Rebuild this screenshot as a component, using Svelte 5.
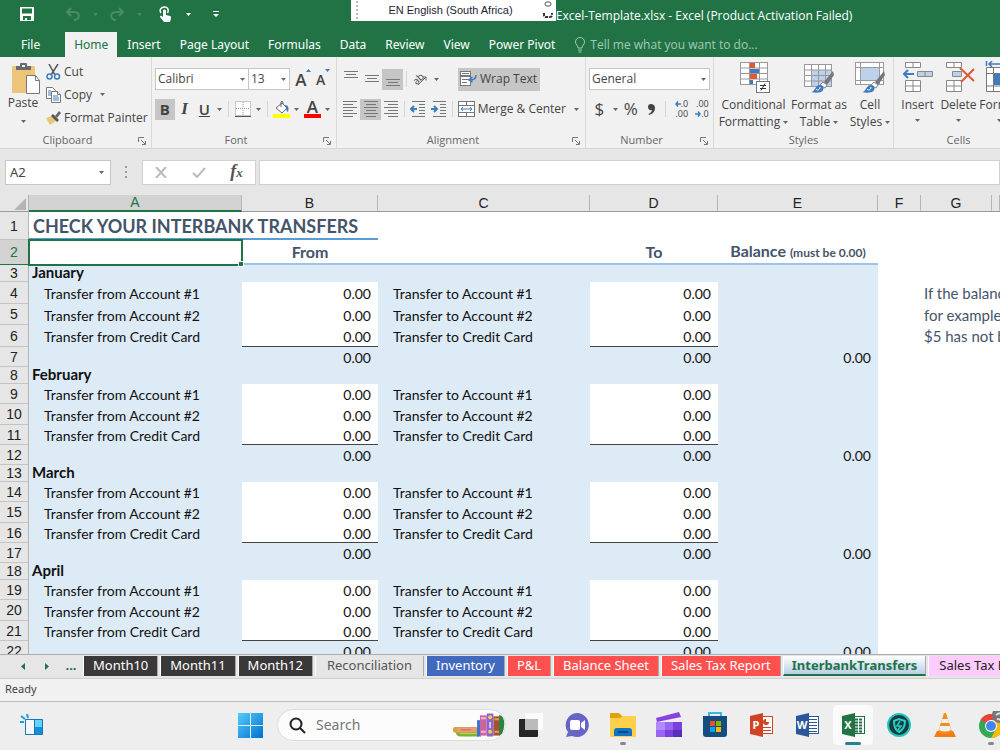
<script lang="ts">
	const ribbonTabs = ["File", "Home", "Insert", "Page Layout", "Formulas", "Data", "Review", "View", "Power Pivot"];
	let activeTab = $state("Home");

	let fontName = $state("Calibri");
	let fontSize = $state("13");
	let numberFormat = $state("General");
	let formula = $state("");

	const columns = [
		{ name: "A", width: 213 },
		{ name: "B", width: 136 },
		{ name: "C", width: 212 },
		{ name: "D", width: 128 },
		{ name: "E", width: 160 },
		{ name: "F", width: 43 },
		{ name: "G", width: 71 },
	];

	const months = ["January", "February", "March", "April"];
	const accounts = ["Account #1", "Account #2", "Credit Card"];
	const notes = ["If the balance is not zero,", "for example, $5.00, then", "$5 has not been entered"];

	// the first block has slightly taller rows than the rest
	const firstHeights = [17, 22, 21, 22, 20];
	const blockHeights = [17, 20, 21, 20, 20];

	const blocks = months.map((month, i) => {
		const heights = i == 0 ? firstHeights : blockHeights;
		return { month, heights, start: 3 + i * 5, notes: i == 0 ? notes : [] };
	});

	const sheets = [
		{ name: "Month10", kind: "dark" },
		{ name: "Month11", kind: "dark" },
		{ name: "Month12", kind: "dark" },
		{ name: "Reconciliation", kind: "plain" },
		{ name: "Inventory", kind: "blue" },
		{ name: "P&L", kind: "red" },
		{ name: "Balance Sheet", kind: "red" },
		{ name: "Sales Tax Report", kind: "red" },
		{ name: "InterbankTransfers", kind: "current" },
		{ name: "Sales Tax Rates", kind: "pink" },
	];
</script>

{#snippet caret()}
	<svg class="caret" width="5" height="3" viewBox="0 0 5 3" aria-hidden="true"><path d="M0 0h5L2.500 3z" fill="currentColor" /></svg>
{/snippet}

{#snippet launcher()}
	<svg class="launcher" width="8" height="8" viewBox="0 0 8 8" fill="none" stroke="#777" aria-hidden="true"><path d="M.5 5V.5H6M3 3l4 4M7.500 4v3.500H4" /></svg>
{/snippet}

{#snippet lines(widths: number[], top: number, align: string)}
	<svg width="16" height="18" viewBox="0 0 16 18" stroke="#777" aria-hidden="true">
		{#each widths as w, i}
			{@const x = align == "left" ? 1 : align == "right" ? 15 - w : 8 - w / 2}
			<path d="M{x} {top + i * 3 + 0.5}h{w}" />
		{/each}
	</svg>
{/snippet}

{#snippet brush()}
	<path d="M31 10l-9 11 3 3 7-10z" fill="#777" />
	<path d="M21 21l4 3-2 3-5-3z" fill="#fff" stroke="#888" />
	<path d="M9 31c4 0 4-7 9-7 4 0 5 5 1 7-3 1-7 1-10 0z" fill="#3f7cbf" />
	<path d="M14 28c1 2 4 1 4-2" fill="none" stroke="#fff" />
{/snippet}

<div class="excel">
	<header>
		<div class="titlebar">
			<button class="quick" aria-label="Save">
				<svg width="14" height="14" viewBox="0 0 14 14" fill="#fff"><path fill-rule="evenodd" d="M0 0h14v14H0zM2 1.500v5h10v-5zM3 9v4h2v-2h2v2h4V9z" /></svg>
			</button>
			<button class="quick dim" aria-label="Undo">
				<svg width="16" height="14" viewBox="0 0 16 14" fill="none" stroke="currentColor" stroke-width="2"><path d="M6 1L2 5l4 4M2 5h7c7 0 6 8 0 8" /></svg>
			</button>
			<span class="quick-caret dim">{@render caret()}</span>
			<button class="quick dim" aria-label="Redo">
				<svg width="16" height="14" viewBox="0 0 16 14" fill="none" stroke="currentColor" stroke-width="2"><path d="M10 1l4 4-4 4M14 5H7C0 5 1 13 7 13" /></svg>
			</button>
			<span class="quick-caret dim">{@render caret()}</span>
			<button class="quick touch" aria-label="Touch mode">
				<svg width="14" height="16" viewBox="0 0 14 16" fill="#fff"><path d="M4 5c0-2 3-2 3 0v4l4 1c1 0 1 1 1 2l-1 4H5L1 11c0-1 1-2 3 0z" /><path d="M2 7C0 4 2 1 5.500 1S10 4 8.500 7" fill="none" stroke="#fff" stroke-width="1.500" /></svg>
			</button>
			<span class="quick-caret">{@render caret()}</span>
			<button class="quick more" aria-label="Customize toolbar">
				<svg width="6" height="7" viewBox="0 0 6 7" fill="#fff"><path d="M0 0h6v1H0zM0 3h6L3 6z" /></svg>
			</button>
			<span class="filename">-Excel-Template.xlsx - Excel (Product Activation Failed)</span>
			<div class="language">
				<i></i>
				<span>EN English (South Africa)</span>
				<svg width="10" height="20" viewBox="0 0 10 20" fill="none" stroke="#555"><rect x="2" y="2" width="6" height="4" rx="2" /><path d="M1 13v2q0 2 2 2h4q2 0 2-2v-2" stroke="#333" stroke-width="2" stroke-dasharray="3 1" /></svg>
			</div>
		</div>
		<nav class="tabs">
			{#each ribbonTabs as tab}
				<button class:active={tab == activeTab} class:file={tab == "File"} onclick={() => (activeTab = tab)}>{tab}</button>
			{/each}
			<label class="tell">
				<svg width="12" height="16" viewBox="0 0 12 16" fill="none" stroke="currentColor"><path d="M4 11C4 8 1.500 8 1.500 5a4.500 4.500 0 0 1 9 0c0 3-2.500 3-2.500 6zM4 13h4M4.500 15h3" /></svg>
				<input type="text" placeholder="Tell me what you want to do..." aria-label="Tell me what you want to do" />
			</label>
		</nav>
	</header>

	<div class="ribbon">
		<section class="group clipboard">
			<div class="body">
				<button class="paste">
					<svg width="30" height="32" viewBox="0 0 30 32">
						<rect x="1" y="3" width="23" height="27" rx="1" fill="#ecc57b" />
						<path d="M5 3h4V1q0-1 1-1h5q1 0 1 1v2h4v4H5z" fill="#6b6b6b" /><rect x="11" y="2" width="3" height="2" fill="#f1f1f1" />
						<path d="M15.500 12.500h9l4 5v13h-13z" fill="#fff" stroke="#777" /><path d="M24.500 12.500v5h4" fill="none" stroke="#777" />
					</svg>
					<span>Paste</span>
					{@render caret()}
				</button>
				<div class="stack">
					<button>
						<svg width="15" height="16" viewBox="0 0 15 16" fill="none" stroke="#555" stroke-width="1.500"><path d="M3 0l6 11M12 0L5 11" /><circle cx="3.500" cy="12.500" r="2.500" stroke="#3f7cbf" /><circle cx="11" cy="12.500" r="2.500" stroke="#3f7cbf" /></svg>
						<span>Cut</span>
					</button>
					<button>
						<svg width="15" height="16" viewBox="0 0 15 16" fill="#fff" stroke="#777"><path d="M.5.5h6l3 3v8h-9z" /><path d="M2 4h3M2 6h4M2 8h4" stroke="#3f7cbf" /><path d="M5.500 4.500h6l3 3v8h-9z" /><path d="M11.500 4.500v3h3" /><path d="M7 9h5M7 11h6M7 13h6" stroke="#3f7cbf" /></svg>
						<span>Copy</span>
						{@render caret()}
					</button>
					<button>
						<svg width="15" height="14" viewBox="0 0 15 14"><path d="M0 7l6-2 4 5-6 4z" fill="#ecc57b" /><path d="M5 5l2-2 6 6-2 2z" fill="#555" /><path d="M9 5l4-5 2 2-4 5z" fill="#666" /></svg>
						<span>Format Painter</span>
					</button>
				</div>
			</div>
			<h2>Clipboard</h2>
			{@render launcher()}
		</section>

		<section class="group font">
			<div class="body rows">
				<div class="row">
					<div class="combo name">
						<select bind:value={fontName} aria-label="Font"><option>Calibri</option><option>Arial</option></select>
						{@render caret()}
					</div>
					<div class="combo size">
						<select bind:value={fontSize} aria-label="Font size"><option>11</option><option>13</option></select>
						{@render caret()}
					</div>
					<button class="tool grow" aria-label="Increase font size">
						<b>A</b><svg width="5" height="3" viewBox="0 0 5 3"><path d="M0 3h5L2.500 0z" fill="#3f7cbf" /></svg>
					</button>
					<button class="tool grow small" aria-label="Decrease font size">
						<b>A</b><svg width="5" height="3" viewBox="0 0 5 3"><path d="M0 0h5L2.500 3z" fill="#3f7cbf" /></svg>
					</button>
				</div>
				<div class="row">
					<button class="tool on bold">B</button>
					<button class="tool italic">I</button>
					<button class="tool underline">U</button>
					<span class="drop">{@render caret()}</span>
					<hr />
					<button class="tool" aria-label="Borders">
						<svg width="16" height="16" viewBox="0 0 16 16" fill="#fff" stroke="#999"><rect x=".5" y=".5" width="15" height="14" stroke-dasharray="1 1" /><path d="M8 1v14M1 7.500h14" stroke-dasharray="1 1" /><path d="M0 15.500h16" stroke="#555" /></svg>
					</button>
					<span class="drop">{@render caret()}</span>
					<hr />
					<button class="tool" aria-label="Fill color">
						<svg width="18" height="17" viewBox="0 0 18 17"><path d="M3 7l6-5 5 5-5 5z" fill="#fff" stroke="#666" /><path d="M8 6V1q1-1 2 0v2" fill="none" stroke="#666" /><path d="M12 4c4 0 4 4 3 7-2-1-2-4-3-7z" fill="#3f7cbf" /><rect y="13" width="17" height="4" fill="#ff0" /></svg>
					</button>
					<span class="drop">{@render caret()}</span>
					<button class="tool color" aria-label="Font color"><b>A</b></button>
					<span class="drop">{@render caret()}</span>
				</div>
			</div>
			<h2>Font</h2>
			{@render launcher()}
		</section>

		<section class="group alignment">
			<div class="body rows">
				<div class="row">
					<button class="tool" aria-label="Top align">{@render lines([14, 10, 14], 1, "center")}</button>
					<button class="tool" aria-label="Middle align">{@render lines([14, 10, 14], 5, "center")}</button>
					<button class="tool on" aria-label="Bottom align">{@render lines([14, 10, 14], 9, "center")}</button>
					<hr />
					<button class="tool" aria-label="Orientation">
						<svg class="orientation" width="16" height="16" viewBox="0 0 16 16"><text x="0" y="10" transform="rotate(-45 7 8)" font-family="Open Sans" font-size="10" fill="#444">ab</text><path d="M5 14l8-8M13 9.500V6h-3" fill="none" stroke="#666" /></svg>
					</button>
					<span class="drop">{@render caret()}</span>
					<span class="gap"></span>
					<button class="wide on">
						<svg width="17" height="16" viewBox="0 0 17 16" fill="#fff" stroke="#777"><rect x=".5" y=".5" width="10" height="4" /><rect x=".5" y="5.500" width="10" height="9" /><path d="M2 2.500h7M2 8.500h7M2 11.500h5" /><path d="M16 4c0 4-2 5-6 5M12.500 6L9 9l3.500 2" fill="none" stroke="#3f7cbf" stroke-width="1.500" /></svg>
						<span>Wrap Text</span>
					</button>
				</div>
				<div class="row">
					<button class="tool" aria-label="Align left">{@render lines([14, 10, 14, 10, 14, 10], 1, "left")}</button>
					<button class="tool on" aria-label="Center">{@render lines([14, 10, 14, 10, 14, 10], 1, "center")}</button>
					<button class="tool" aria-label="Align right">{@render lines([14, 10, 14, 10, 14, 10], 1, "right")}</button>
					<hr />
					<button class="tool" aria-label="Decrease indent">
						<svg width="16" height="16" viewBox="0 0 16 16" fill="none" stroke="#777"><path d="M2 .5h13M9 3.500h6M9 6.500h6M9 9.500h6M9 12.500h6M2 15.500h13" /><path d="M7 8H1M4 5L1 8l3 3" stroke="#3f7cbf" stroke-width="2" /></svg>
					</button>
					<button class="tool" aria-label="Increase indent">
						<svg width="16" height="16" viewBox="0 0 16 16" fill="none" stroke="#777"><path d="M2 .5h13M9 3.500h6M9 6.500h6M9 9.500h6M9 12.500h6M2 15.500h13" /><path d="M0 8h6M3 5l3 3-3 3" stroke="#3f7cbf" stroke-width="2" /></svg>
					</button>
					<hr />
					<button class="wide">
						<svg width="17" height="16" viewBox="0 0 17 16" fill="#fff" stroke="#777"><rect x=".5" y=".5" width="16" height="15" /><path d="M.5 4.500h16M.5 11.500h16M8.500 0v4M8.500 12v4" /><path d="M3 8h11M5 6L3 8l2 2M12 6l2 2-2 2" fill="none" stroke="#3f7cbf" /></svg>
						<span>Merge &amp; Center</span>
						{@render caret()}
					</button>
				</div>
			</div>
			<h2>Alignment</h2>
			{@render launcher()}
		</section>

		<section class="group number">
			<div class="body rows">
				<div class="row">
					<div class="combo format">
						<select bind:value={numberFormat} aria-label="Number format"><option>General</option><option>Number</option></select>
						{@render caret()}
					</div>
				</div>
				<div class="row">
					<button class="tool sign">$</button>
					<span class="drop">{@render caret()}</span>
					<button class="tool sign">%</button>
					<button class="tool comma" aria-label="Comma style"><svg width="7" height="11" viewBox="0 0 7 11"><path d="M3 0c2 0 4 1 4 4 0 4-3 6-6 7l-.5-1C3 9 4 7 4 6 2 7 0 5 0 3s1-3 3-3z" fill="#444" /></svg></button>
					<hr />
					<button class="tool decimals"><span><svg width="6" height="6" viewBox="0 0 6 6" fill="none" stroke="#3f7cbf" stroke-width="1.500"><path d="M6 3H1M3 .5L1 3l2 2.500" /></svg>.0</span><span>.00</span></button>
					<button class="tool decimals"><span>.00</span><span><svg width="6" height="6" viewBox="0 0 6 6" fill="none" stroke="#3f7cbf" stroke-width="1.500"><path d="M0 3h5M3 .5L5 3 3 5.500" /></svg>.0</span></button>
				</div>
			</div>
			<h2>Number</h2>
			{@render launcher()}
		</section>

		<section class="group styles">
			<div class="body">
				<button class="big conditional">
					<svg width="34" height="34" viewBox="0 0 34 34" fill="#fff" stroke="#999">
						<rect x="3.500" y="1.500" width="27" height="22" /><path d="M3 7h28M3 12.500h28M3 18h28M12.500 1v22M22.500 1v22" />
						<g stroke="none"><rect x="13" y="2" width="5" height="5" fill="#dd5a35" /><rect x="13" y="8" width="9" height="4" fill="#3f7cbf" /><rect x="13" y="13" width="7" height="5" fill="#dd5a35" /><rect x="13" y="19" width="3" height="4" fill="#3f7cbf" /></g>
						<rect x="19.500" y="20.500" width="13" height="11" stroke="#777" /><path d="M23 24.500h6M23 27.500h6M28 22.500l-4 7" stroke="#333" />
					</svg>
					<span>Conditional</span><span>Formatting {@render caret()}</span>
				</button>
				<button class="big table-format">
					<svg width="34" height="34" viewBox="0 0 34 34" fill="#fff" stroke="#999">
						<rect x="2.500" y="3.500" width="27" height="22" /><rect x="9" y="9" width="20" height="16" fill="#bdd1ea" stroke="none" /><path d="M2 9h28M2 14.500h28M2 20h28M9.500 3v22M16.500 3v22M23.500 3v22" />
						<g stroke="none">{@render brush()}</g>
					</svg>
					<span>Format as</span><span>Table {@render caret()}</span>
				</button>
				<button class="big cell-styles">
					<svg width="34" height="34" viewBox="0 0 34 34" fill="#fff" stroke="#999">
						<rect x="2.500" y="1.500" width="28" height="22" /><path d="M2 6.500h29M2 19.500h29M7.500 1v23M26.500 1v23" /><rect x="8" y="7" width="18" height="12" fill="#bdd1ea" stroke="none" />
						<g stroke="none">{@render brush()}</g>
					</svg>
					<span>Cell</span><span>Styles {@render caret()}</span>
				</button>
			</div>
			<h2>Styles</h2>
		</section>

		<section class="group cells">
			<div class="body">
				<button class="big">
					<svg width="34" height="34" viewBox="0 0 34 34" fill="#fff" stroke="#888">
						<path d="M4.500 1.500h15v5h-15zM12 1.500v5M4.500 19.500h15v11h-15zM12 19.500v11M4.500 25h15" /><path d="M16.500 10.500h15v5h-15z" fill="#bdd1ea" /><path d="M24 10.500v5" /><path d="M13 13H3M7 9l-4 4 4 4" fill="none" stroke="#3f7cbf" stroke-width="2" />
					</svg>
					<span>Insert</span>{@render caret()}
				</button>
				<button class="big">
					<svg width="34" height="34" viewBox="0 0 34 34" fill="#fff" stroke="#888">
						<path d="M4.500 1.500h15v5h-15zM12 1.500v5M4.500 19.500h15v11h-15zM12 19.500v11M4.500 25h15" /><path d="M10.500 10.500h9v5h-9z" fill="#bdd1ea" /><path d="M18 7l14 13M32 8L19 21" fill="none" stroke="#dd5a35" stroke-width="2" />
					</svg>
					<span>Delete</span>{@render caret()}
				</button>
				<button class="big">
					<svg width="34" height="34" viewBox="0 0 34 34" fill="#fff" stroke="#777">
						<path d="M3.500 6.500h27v24h-27zM3 12.500h28M3 25h28M10.500 6v25" /><rect x="11" y="13" width="14" height="11" fill="#3f7cbf" stroke="none" /><path d="M3.500 0v5M30 3H6M9 0L6 3l3 3" fill="none" stroke="#3f7cbf" stroke-width="1.500" />
					</svg>
					<span>Format</span>{@render caret()}
				</button>
			</div>
			<h2>Cells</h2>
		</section>
	</div>

	<div class="formula-bar">
		<div class="name-box">
			<input type="text" value="A2" aria-label="Name box" />
			{@render caret()}
		</div>
		<svg class="dots" width="3" height="12" viewBox="0 0 3 12" fill="#999"><path d="M0 0h2v2H0zM0 5h2v2H0zM0 10h2v2H0z" /></svg>
		<div class="entry">
			<button aria-label="Cancel"><svg width="12" height="11" viewBox="0 0 12 11" fill="none" stroke="#bbb" stroke-width="2"><path d="M1 0l10 11M11 0L1 11" /></svg></button>
			<button aria-label="Enter"><svg width="14" height="11" viewBox="0 0 14 11" fill="none" stroke="#bbb" stroke-width="2"><path d="M1 6l4 4 8-9" /></svg></button>
			<button class="fx" aria-label="Insert function">f<small>x</small></button>
		</div>
		<input class="formula" type="text" bind:value={formula} aria-label="Formula" />
	</div>

	<main>
		<table>
			<colgroup>
				<col class="index" />
				{#each columns as column}
					<col style="width: {column.width}px" />
				{/each}
				<col />
			</colgroup>
			<thead>
				<tr>
					<th class="corner"><svg width="12" height="12" viewBox="0 0 12 12"><path d="M12 0v12H0z" fill="#b4b4b4" /></svg></th>
					{#each columns as column}
						<th class:selected={column.name == "A"}>{column.name}</th>
					{/each}
					<th></th>
				</tr>
			</thead>
			<tbody>
				<tr style="height: 28px">
					<th>1</th>
					<td colspan="2" class="title">CHECK YOUR INTERBANK TRANSFERS</td>
					<td colspan="6"></td>
				</tr>
				<tr class="headings" style="height: 25px">
					<th class="selected">2</th>
					<td class="cursor"></td>
					<td>From</td>
					<td></td>
					<td>To</td>
					<td>Balance <small>(must be 0.00)</small></td>
					<td class="blank" colspan="3"></td>
				</tr>
				{#each blocks as block}
					<tr style="height: {block.heights[0]}px">
						<th>{block.start}</th>
						<td class="fill month">{block.month}</td>
						<td class="fill" colspan="4"></td>
						<td colspan="3"></td>
					</tr>
					{#each accounts as account, i}
						<tr class:last={i == 2} style="height: {block.heights[i + 1]}px">
							<th>{block.start + i + 1}</th>
							<td class="fill label">Transfer from {account}</td>
							<td class="amount">0.00</td>
							<td class="fill label">Transfer to {account}</td>
							<td class="amount">0.00</td>
							<td class="fill"></td>
							<td></td>
							<td class="note" colspan="2">{block.notes[i] ?? ""}</td>
						</tr>
					{/each}
					<tr style="height: {block.heights[4]}px">
						<th>{block.start + 4}</th>
						<td class="fill"></td>
						<td class="fill total">0.00</td>
						<td class="fill"></td>
						<td class="fill total">0.00</td>
						<td class="fill total">0.00</td>
						<td colspan="3"></td>
					</tr>
				{/each}
			</tbody>
		</table>
	</main>

	<nav class="sheets">
		<button class="arrow" aria-label="Previous sheet"><svg width="4" height="7" viewBox="0 0 4 7"><path d="M4 0v7L0 3.500z" fill="#217346" /></svg></button>
		<button class="arrow" aria-label="Next sheet"><svg width="4" height="7" viewBox="0 0 4 7"><path d="M0 0v7l4-3.500z" fill="#217346" /></svg></button>
		<button class="arrow">...</button>
		{#each sheets as sheet}
			<button class="sheet {sheet.kind}">{sheet.name}</button>
		{/each}
	</nav>

	<div class="status">Ready</div>

	<footer>
		<button class="app widgets" aria-label="Widgets">
			<svg width="24" height="22" viewBox="0 0 24 22"><path d="M7 0l1 4M1 2l4 3M0 8h4" stroke="#2299dd" stroke-width="2" /><rect x="5" y="5" width="18" height="16" rx="1" fill="#1677b5" /><rect x="6" y="6" width="8" height="14" fill="#f4f8fb" /><path d="M15 6h7v7h-7z" fill="#62d2ff" /><path d="M15 13h7v7h-7z" fill="#168ee0" /></svg>
		</button>
		<button class="app" aria-label="Start">
			<svg width="26" height="26" viewBox="0 0 26 26"><defs><linearGradient id="win" x1="0" y1="0" x2="1" y2="1"><stop offset="0" stop-color="#54ccfb" /><stop offset="1" stop-color="#0070cf" /></linearGradient></defs><path d="M1 1h12v12H1zM14 1h12v12H14zM1 14h12v12H1zM14 14h12v12H14z" fill="url(#win)" /></svg>
		</button>
		<label class="search">
			<svg width="17" height="17" viewBox="0 0 17 17" fill="none" stroke="#222" stroke-width="2"><circle cx="7" cy="7" r="5.500" /><path d="M11 11l5 5" /></svg>
			<input type="text" placeholder="Search" aria-label="Search" />
			<svg class="books" width="52" height="26" viewBox="0 0 54 26">
				<path d="M3 20h24v5H8q-5 0-5-5z" fill="#78b32c" /><path d="M7 22h18" stroke="#c3dd6a" />
				<rect y="15" width="26" height="6" rx="2" fill="#dba23a" /><rect x="4" y="16" width="20" height="4" fill="#e89a8c" /><path d="M8 18h11" stroke="#c9665c" />
				<rect x="25" y="8" width="4" height="17" fill="#3b73d1" /><rect x="28" y="3" width="7" height="21" fill="#c9669f" /><path d="M29 6h5M29 20h5" stroke="#f5b6dc" stroke-width="2" /><rect x="35" y="1" width="7" height="24" rx="1" fill="#8a66cf" /><circle cx="38.500" cy="5" r="2" fill="#ffc84a" /><path d="M38.500 10v6" stroke="#d9c6ff" stroke-width="2" /><circle cx="38.500" cy="20" r="2" fill="#ffc84a" /><rect x="42" y="4" width="7" height="20" fill="#a55231" /><path d="M43 7h5M43 20h5" stroke="#eb9a53" stroke-width="2" /><path d="M48 2l4 3q3 8-1 17l-3 2z" fill="#258544" />
			</svg>
		</label>
		<button class="app" aria-label="Task view">
			<svg width="26" height="26" viewBox="0 0 26 26"><rect x="1" y="7" width="19" height="18" rx="1" fill="#252525" /><rect x="7" y="1" width="18" height="17" rx="1" fill="#fff" opacity=".8" /><path d="M7 7h13v11H7z" fill="#bbb" /></svg>
		</button>
		<button class="app" aria-label="Chat">
			<svg width="26" height="26" viewBox="0 0 26 26"><path d="M13 1a12 12 0 1 1-5 23l-6 1 2-5A12 12 0 0 1 13 1z" fill="#6764c6" /><rect x="6" y="8" width="10" height="10" rx="2" fill="#fff" /><path d="M17 11l4-3v10l-4-3z" fill="#fff" /></svg>
		</button>
		<button class="app open" aria-label="File Explorer">
			<svg width="26" height="26" viewBox="0 0 26 26"><path d="M0 2q0-1 1-1h8l3 3h13q1 0 1 1v19H0z" fill="#dfa20c" /><path d="M0 6h10l3-2h13v20q0 1-1 1H1q-1 0-1-1z" fill="#ffd04b" /><path d="M4 24v-5q0-3 3-3h12q3 0 3 3v5z" fill="#1273bf" /><path d="M8 20h10" stroke="#0b4c86" stroke-width="2" /></svg>
		</button>
		<button class="app" aria-label="Clipchamp">
			<svg width="26" height="26" viewBox="0 0 26 26"><path d="M0 6L23 0l2 5L1 10z" fill="#8742df" /><path d="M0 10h26v14q0 1-1 1H1q-1 0-1-1z" fill="#7b3fe0" /><path d="M0 10h9v8H0z" fill="#b28aff" /><path d="M9 10h8v8H9zM0 18h9v7H0z" fill="#9864f2" /><path d="M17 18h9v7h-9z" fill="#5630bb" /></svg>
		</button>
		<button class="app" aria-label="Store">
			<svg width="26" height="26" viewBox="0 0 26 26"><path d="M7 6V1h12v5" fill="none" stroke="#36b8ed" stroke-width="2" /><path d="M1 4h24v18q0 3-3 3H4q-3 0-3-3z" fill="#174c7e" /><path d="M8 9h5v5H8z" fill="#f25022" /><path d="M14 9h5v5h-5z" fill="#7fba00" /><path d="M8 15h5v5H8z" fill="#00a4ef" /><path d="M14 15h5v5h-5z" fill="#ffb900" /></svg>
		</button>
		{@render office("PowerPoint", "P", "#d04423")}
		{@render office("Word", "W", "#2b579a")}
		{@render office("Excel", "X", "#217346")}
		<button class="app" aria-label="Security">
			<svg width="26" height="26" viewBox="0 0 26 26"><circle cx="13" cy="13" r="11" fill="#173b3e" stroke="#20c7bd" stroke-width="2" /><path d="M8 9l5-2 6 2c0 6-2 9-6 11-4-2-5-6-5-11z" fill="none" stroke="#27d0c0" stroke-width="2" /><path d="M14 9l-3 5h4l-3 4" fill="none" stroke="#27d0c0" stroke-width="1.500" /></svg>
		</button>
		<button class="app" aria-label="VLC">
			<svg width="26" height="26" viewBox="0 0 26 26"><path d="M5 19h16l3 6H2z" fill="#f07c12" /><path d="M12 1h2l6 19q-7 4-14 0z" fill="#f78b1e" /><path d="M10 7h6l1 4H9zM8 14h10l1 4q-6 3-12 0z" fill="#eee" /></svg>
		</button>
		<button class="app open" aria-label="Chrome">
			<svg width="28" height="28" viewBox="0 0 28 28"><circle cx="14" cy="15" r="12" fill="#34a853" /><path d="M14 15L3.600 9A12 12 0 0 1 24.400 9z" fill="#ea4335" /><path d="M14 9h10.400A12 12 0 0 1 14 27l5-9z" fill="#fbbc05" /><circle cx="14" cy="15" r="6" fill="#fff" /><circle cx="14" cy="15" r="5" fill="#4285f4" /><circle cx="23" cy="4" r="8" fill="#777" /><path d="M19 4q5-4 8 1M20 8l5 1" fill="none" stroke="#ddd" stroke-width="2" /></svg>
		</button>
	</footer>
</div>

{#snippet office(name: string, letter: string, color: string)}
	<button class="app" class:running={name == "Excel"} aria-label={name}>
		<svg width="24" height="24" viewBox="0 0 24 24">
			<rect x="12.500" y="3.500" width="11" height="17" fill="#fff" stroke={color} />
			{#if name == "PowerPoint"}
				<circle cx="17" cy="9" r="3" fill={color} /><path d="M17 9V6h3v3z" fill="#fff" /><path d="M14 14.500h8M14 17.500h8" stroke={color} />
			{:else if name == "Word"}
				<path d="M14 6.500h8M14 9.500h8M14 12.500h8M14 15.500h8M14 18.500h8" stroke={color} />
			{:else}
				<path d="M14 6.500h8M14 9.500h8M14 12.500h8M14 15.500h8M14 18.500h8" stroke={color} stroke-width="2" stroke-dasharray="3 1" />
			{/if}
			<path d="M1 3l13-3v24L1 21z" fill={color} />
			<text x="7" y="16" text-anchor="middle" font-family="Open Sans" font-weight="700" font-size="11" fill="#fff">{letter}</text>
		</svg>
	</button>
{/snippet}

<style>
	:global(body) {
		margin: 0;
	}

	.excel {
		display: flex;
		flex-direction: column;
		height: 100vh;
		overflow: hidden;
		background: #e6e6e6;
		color: #444;
		font: 12px/16px "Noto Sans", "Open Sans", sans-serif;
		white-space: nowrap;
	}

	.excel * {
		box-sizing: border-box;
	}

	button {
		padding: 0;
		border: 0;
		background: none;
		color: inherit;
		font: inherit;
		white-space: nowrap;
	}

	input,
	select {
		min-width: 0;
		border: 0;
		outline: 0;
		background: none;
		color: inherit;
		font: inherit;
	}

	svg {
		flex: none;
	}

	.caret {
		color: #666;
	}

	header {
		flex: none;
		background: #217346;
		color: #fff;
	}

	.titlebar {
		position: relative;
		display: flex;
		align-items: center;
		height: 32px;
		padding: 0 0 4px 16px;
		font-family: "Open Sans", "Noto Sans", sans-serif;
	}

	.quick {
		display: flex;
		justify-content: center;
		width: 22px;
		margin-right: 24px;
	}

	.quick.dim {
		margin-right: 0;
		color: #4b8b68;
	}

	.touch,
	.quick.more {
		margin-right: 0;
	}

	.quick-caret {
		display: flex;
		justify-content: center;
		width: 22px;
	}

	.quick-caret .caret {
		color: #fff;
	}

	.quick-caret.dim .caret {
		color: #4b8b68;
	}

	.quick.touch {
		margin: 0 0 0 5px;
	}

	.quick-caret + .more {
		margin-left: 6px;
	}

	.filename {
		margin: 4px 0 0 325px;
	}

	.language {
		position: absolute;
		top: 0;
		left: 351px;
		display: flex;
		align-items: center;
		justify-content: space-between;
		width: 205px;
		height: 21px;
		padding: 0 3px 2px 5px;
		background: #fff;
		color: #223;
		font: 11px/18px "Liberation Sans", sans-serif;
	}

	.language i {
		height: 18px;
		border-left: 2px dotted #bbb;
	}

	.tabs {
		display: flex;
		gap: 1px;
		height: 25px;
		padding-left: 10px;
	}

	.tabs button {
		padding: 0 9px;
	}

	.tabs .file {
		padding: 0 11px;
		margin-right: 13px;
	}

	.tabs .active {
		background: #f1f1f1;
		color: #217346;
	}

	.tell {
		display: flex;
		flex: 1;
		align-items: center;
		gap: 4px;
		padding-left: 9px;
		color: #a3c9b4;
		font-family: "Open Sans", "Noto Sans", sans-serif;
	}

	.tell input {
		flex: 1;
		padding: 0;
	}

	.tell input::placeholder {
		color: #a3c9b4;
		opacity: 1;
	}

	.ribbon {
		display: flex;
		flex: none;
		height: 92px;
		overflow: hidden;
		border-bottom: 1px solid #d5d5d5;
		background: #f1f1f1;
		font-family: "Open Sans", "Noto Sans", sans-serif;
	}

	.group {
		position: relative;
		display: flex;
		flex: none;
		flex-direction: column;
		border-right: 1px solid #dadada;
	}

	.group h2 {
		margin: 0;
		padding-right: 16px;
		color: #666;
		font-size: 11px;
		font-weight: 400;
		line-height: 16px;
		text-align: center;
	}

	.styles h2,
	.cells h2 {
		padding-right: 0;
	}

	.body {
		display: flex;
		height: 75px;
	}

	.launcher {
		position: absolute;
		right: 5px;
		bottom: 3px;
	}

	.clipboard {
		width: 152px;
	}

	.font {
		width: 185px;
	}

	.alignment {
		width: 249px;
	}

	.number {
		width: 128px;
	}

	.styles {
		width: 180px;
	}

	.cells {
		width: 130px;
	}

	.paste {
		display: flex;
		flex-direction: column;
		align-items: center;
		width: 36px;
		margin: 6px 5px 0 5px;
	}

	.paste .caret {
		margin-top: 9px;
	}

	.paste svg:first-child {
		margin-left: 6px;
	}

	.stack {
		display: flex;
		flex-direction: column;
		padding-top: 3px;
	}

	.stack button,
	.wide {
		display: flex;
		align-items: center;
		gap: 3px;
		height: 23px;
	}

	.stack .caret,
	.wide .caret {
		margin-left: 5px;
	}

	.rows {
		flex-direction: column;
		gap: 8px;
		padding: 11px 3px 0 3px;
	}

	.row {
		display: flex;
		align-items: center;
		height: 22px;
	}

	.row hr {
		width: 1px;
		height: 16px;
		margin: 0 3px;
		border: 0;
		background: #d5d5d5;
	}

	.font .row hr {
		margin-right: 4px;
	}

	.tool {
		display: flex;
		align-items: center;
		justify-content: center;
		width: 20px;
		height: 21px;
	}

	.alignment .tool,
	.number .tool {
		width: 21px;
	}

	.on {
		background: #c6c6c6;
	}

	.drop {
		display: flex;
		justify-content: center;
		width: 11px;
	}

	.gap {
		width: 16px;
	}

	.orientation {
		overflow: visible;
	}

	.wide {
		padding: 0 3px 0 2px;
	}

	.combo,
	.name-box {
		position: relative;
		display: flex;
		height: 22px;
		border: 1px solid #c6c6c6;
		background: #fff;
	}

	.combo select {
		width: 100%;
		padding: 0 0 0 2px;
		appearance: none;
	}

	.combo .caret,
	.name-box .caret {
		position: absolute;
		top: 9px;
		right: 3px;
	}

	.combo.name {
		width: 95px;
	}

	.combo.size {
		width: 42px;
		margin-right: 3px;
		border-left: 0;
	}

	.combo.format {
		width: 122px;
	}

	.grow {
		align-items: flex-start;
	}

	.grow b {
		font-size: 17px;
		font-weight: 600;
		line-height: 22px;
	}

	.grow.small b {
		font-size: 14px;
	}

	.bold,
	.italic,
	.underline {
		font-size: 15px;
		font-weight: 700;
	}

	.italic {
		font-family: "Liberation Serif", serif;
		font-size: 17px;
		font-style: italic;
	}

	.underline {
		font-weight: 600;
		text-decoration: underline;
	}

	.color b {
		width: 17px;
		height: 18px;
		border-bottom: 4px solid #f00;
		font-size: 17px;
		font-weight: 600;
		line-height: 13px;
	}

	.sign {
		font-size: 17px;
	}

	.decimals {
		flex-direction: column;
		font-size: 9px;
		line-height: 10px;
	}

	.decimals span {
		width: 18px;
		text-align: right;
	}

	.styles .body {
		padding-left: 4px;
	}

	.cells .body {
		padding-left: 3px;
	}

	.big {
		display: flex;
		flex-direction: column;
		align-items: center;
		width: 41px;
		padding-top: 4px;
	}

	.big span {
		line-height: 17px;
	}

	.big svg:first-child {
		margin-bottom: 1px;
	}

	.big span .caret {
		vertical-align: middle;
	}

	.big > .caret {
		margin-top: 6px;
	}

	.conditional {
		width: 71px;
	}

	.table-format {
		width: 60px;
	}

	.cell-styles {
		width: 42px;
	}

	.formula-bar {
		display: flex;
		flex: none;
		align-items: center;
		height: 46px;
		padding-left: 5px;
	}

	.name-box {
		width: 106px;
		height: 25px;
	}

	.name-box input {
		width: 80px;
		padding: 0 4px;
		font-size: 13px;
	}

	.name-box .caret {
		top: 10px;
		right: 6px;
	}

	.dots {
		margin: 0 14px;
	}

	.entry {
		display: flex;
		align-items: center;
		justify-content: space-around;
		width: 114px;
		height: 25px;
		margin-right: 3px;
		border: 1px solid #d0d0d0;
		background: #fff;
	}

	.entry button {
		display: flex;
		align-items: baseline;
	}

	.entry .fx {
		color: #555;
		font: italic 700 18px/22px "Liberation Serif", serif;
	}

	.fx small {
		font-size: 13px;
	}

	.formula {
		flex: 1;
		height: 25px;
		border: 1px solid #d0d0d0;
		background: #fff;
	}

	main {
		flex: 1;
		min-height: 0;
		overflow: hidden;
		background: #fff;
	}

	table {
		width: 100%;
		border-spacing: 0;
		table-layout: fixed;
		color: #111;
		font: 14px/16px Lato, "Open Sans", sans-serif;
	}

	.index {
		width: 29px;
	}

	th,
	td {
		padding: 0;
	}

	th {
		border-right: 1px solid #b5b5b5;
		border-bottom: 1px solid #c4c4c4;
		background: #e6e6e6;
		color: #222;
		font: 14px/16px "Liberation Sans", sans-serif;
	}

	thead th {
		height: 17px;
		border-bottom-color: #999;
		line-height: 15px;
	}

	.corner {
		text-align: right;
	}

	.corner svg {
		display: block;
		margin: 2px 2px 0 auto;
	}

	th.selected {
		border-color: #217346;
		background: #d2d2d2;
		color: #217346;
	}

	thead .selected {
		border-right-color: #b5b5b5;
		border-bottom-width: 2px;
	}

	.title {
		padding: 2px 0 0 4px;
		border-bottom: 2px solid #5b9bd5;
		color: #44546a;
		font-size: 18px;
		font-weight: 700;
		line-height: 24px;
	}

	.headings td {
		border-bottom: 2px solid #9dc3e6;
		color: #44546a;
		font-size: 16px;
		font-weight: 700;
		text-align: center;
	}

	.headings small {
		font-size: 12px;
	}

	.headings .blank {
		border: 0;
	}

	.headings .cursor {
		position: relative;
		border: 0;
		outline: 2px solid #217346;
		outline-offset: -1px;
	}

	.cursor::after {
		position: absolute;
		right: -2px;
		bottom: -2px;
		width: 4px;
		height: 4px;
		border: 1px solid #fff;
		background: #217346;
		content: "";
	}

	.fill {
		background: #ddebf7;
	}

	.month {
		padding-left: 3px;
		font-size: 15px;
		font-weight: 700;
		line-height: 14px;
		vertical-align: top;
	}

	.label {
		padding: 2px 0 0 15px;
	}

	.amount,
	.total {
		padding: 2px 7px 0 0;
		text-align: right;
	}

	.last .amount {
		border-bottom: 1px solid #444;
	}

	.note {
		padding-left: 3px;
		color: #44546a;
		font-size: 15px;
	}

	.sheets {
		display: flex;
		flex: none;
		height: 24px;
		padding: 1px 0 2px 11px;
		border-top: 1px solid #aaa;
		overflow: hidden;
		font-size: 13px;
		line-height: 18px;
	}

	.sheets button {
		padding-bottom: 2px;
	}

	.arrow {
		flex: none;
		width: 24px;
		color: #217346;
		font-weight: 700;
	}

	.sheet {
		flex: none;
		padding: 0 9px;
		margin-right: 2px;
		border-right: 1px solid #aaa;
		border-left: 1px solid #fff;
	}

	.plain {
		padding: 0 11px;
		color: #555;
	}

	.dark {
		background: #3a3838;
		color: #fff;
	}

	.blue {
		background: #4169bd;
		color: #fff;
	}

	.red {
		background: #ff5050;
		color: #fff;
	}

	.sheets .current {
		padding: 0 8px;
		border-bottom: 2px solid #217346;
		background: linear-gradient(#fff, #b9cee7);
		color: #217346;
		font-weight: 700;
	}

	.pink {
		padding: 0 10px;
		background: #ffccff;
		color: #222;
	}

	.status {
		flex: none;
		height: 24px;
		padding: 2px 5px;
		border-top: 1px solid #d0d0d0;
		border-bottom: 1px solid #bbb;
		background: #f1f1f1;
		font-size: 11px;
	}

	footer {
		display: flex;
		flex: none;
		align-items: center;
		height: 48px;
		padding: 0 0 2px 9px;
		overflow: hidden;
		background: #eee;
	}

	.app {
		position: relative;
		display: flex;
		flex: none;
		align-items: center;
		justify-content: center;
		width: 46px;
		height: 40px;
	}

	.widgets {
		margin-right: 172px;
	}

	.search {
		display: flex;
		flex: none;
		align-items: center;
		gap: 10px;
		width: 229px;
		height: 32px;
		margin: 0 2px 0 4px;
		padding-left: 11px;
		overflow: hidden;
		border: 1px solid #ddd;
		border-radius: 16px;
		background: #fcfcfc;
	}

	.search input {
		flex: 1;
		padding: 0;
		font-size: 14px;
	}

	.open::after,
	.running::after {
		position: absolute;
		bottom: 0;
		width: 6px;
		height: 3px;
		border-radius: 2px;
		background: #888;
		content: "";
	}

	.running::before {
		position: absolute;
		inset: 0 3px;
		z-index: -1;
		border-radius: 4px;
		background: #fafafa;
		content: "";
	}

	.running {
		z-index: 0;
	}

	.running::after {
		width: 16px;
		background: #23808f;
	}
</style>
